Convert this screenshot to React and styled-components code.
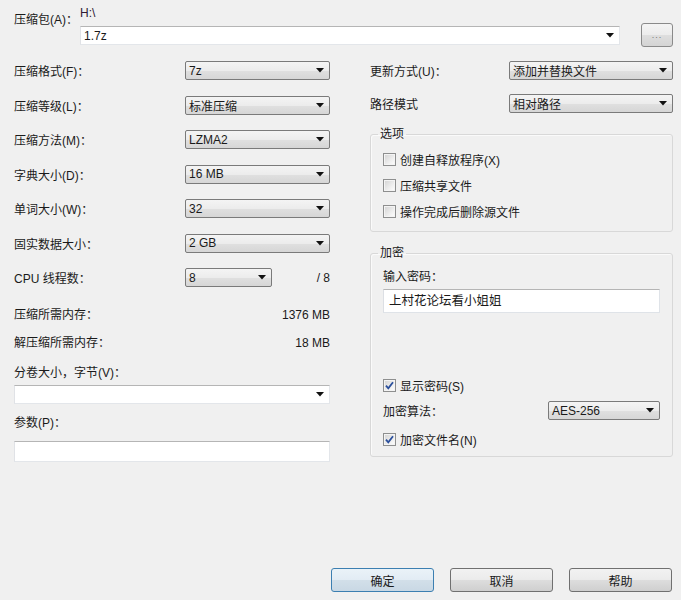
import React from 'react';
import styled, { createGlobalStyle } from 'styled-components';

const GlobalStyle = createGlobalStyle`
  html, body {
    margin: 0;
    padding: 0;
    background: #f0f0f0;
  }
  body {
    font-family: "Liberation Sans", "Noto Sans CJK SC", sans-serif;
    font-size: 12px;
    color: #1a1a1a;
  }
  * {
    box-sizing: border-box;
  }
`;

const Arrow = () => (
    <svg width="8" height="5" viewBox="0 0 8 5">
        <polygon points="0,0 8,0 4,4.5" fill="#111" />
    </svg>
);

const Check = () => (
    <svg width="11" height="11" viewBox="0 0 11 11">
        <path d="M2 5.6 L4.3 8.3 L9 2.2" fill="none" stroke="#2a4f9c" strokeWidth="1.8" />
    </svg>
);

const Select = ({ value, width }) => (
    <SelectBox style={width ? { width } : undefined}>
        <span>{value}</span>
        <Arrow />
    </SelectBox>
);

const EditCombo = ({ value }) => (
    <EditBox>
        <span>{value}</span>
        <Arrow />
    </EditBox>
);

const CheckItem = ({ checked, children }) => (
    <CheckRow>
        <CheckBox>{checked && <Check />}</CheckBox>
        <span>{children}</span>
    </CheckRow>
);

const App = () => {
    return (
        <Window>
            <GlobalStyle />
            <TopRow>
                <TopLabel>压缩包(A)：</TopLabel>
                <PathColumn>
                    <PathHint>H:\</PathHint>
                    <EditCombo value="1.7z" />
                </PathColumn>
                <BrowseButton>...</BrowseButton>
            </TopRow>

            <Columns>
                <LeftColumn>
                    <FieldList>
                        <FieldRow>
                            <span>压缩格式(F)：</span>
                            <Select value="7z" />
                        </FieldRow>
                        <FieldRow>
                            <span>压缩等级(L)：</span>
                            <Select value="标准压缩" />
                        </FieldRow>
                        <FieldRow>
                            <span>压缩方法(M)：</span>
                            <Select value="LZMA2" />
                        </FieldRow>
                        <FieldRow>
                            <span>字典大小(D)：</span>
                            <Select value="16 MB" />
                        </FieldRow>
                        <FieldRow>
                            <span>单词大小(W)：</span>
                            <Select value="32" />
                        </FieldRow>
                        <FieldRow>
                            <span>固实数据大小：</span>
                            <Select value="2 GB" />
                        </FieldRow>
                        <CpuRow>
                            <span>CPU 线程数：</span>
                            <Select value="8" />
                            <Value>/ 8</Value>
                        </CpuRow>
                    </FieldList>
                    <InfoRow $mt={20}>
                        <span>压缩所需内存：</span>
                        <Value>1376 MB</Value>
                    </InfoRow>
                    <InfoRow $mt={12}>
                        <span>解压缩所需内存：</span>
                        <Value>18 MB</Value>
                    </InfoRow>
                    <StackLabel $mt={14}>分卷大小，字节(V)：</StackLabel>
                    <EditCombo value="" />
                    <StackLabel $mt={11}>参数(P)：</StackLabel>
                    <TextBox />
                </LeftColumn>

                <RightColumn>
                    <WideRow>
                        <span>更新方式(U)：</span>
                        <Select value="添加并替换文件" />
                    </WideRow>
                    <WideRow $mt={14}>
                        <span>路径模式</span>
                        <Select value="相对路径" />
                    </WideRow>

                    <Group $mt={13}>
                        <Legend>选项</Legend>
                        <GroupBody $pt={4} $pb={7}>
                            <CheckItem>创建自释放程序(X)</CheckItem>
                            <CheckItem>压缩共享文件</CheckItem>
                            <CheckItem>操作完成后删除源文件</CheckItem>
                        </GroupBody>
                    </Group>

                    <Group $mt={13}>
                        <Legend>加密</Legend>
                        <GroupBody $pt={8} $pb={4}>
                            <StackLabel>输入密码：</StackLabel>
                            <PasswordBox>上村花论坛看小姐姐</PasswordBox>
                            <Spacer $h={59} />
                            <CheckItem checked>显示密码(S)</CheckItem>
                            <AlgoRow>
                                <span>加密算法：</span>
                                <Select value="AES-256" />
                            </AlgoRow>
                            <Spacer $h={6} />
                            <CheckItem checked>加密文件名(N)</CheckItem>
                        </GroupBody>
                    </Group>
                </RightColumn>
            </Columns>

            <ButtonBar>
                <DialogButton $primary>确定</DialogButton>
                <DialogButton>取消</DialogButton>
                <DialogButton>帮助</DialogButton>
            </ButtonBar>
        </Window>
    );
};

export default App;

const Window = styled.div`
display: flex;
flex-direction: column;
height: 600px;
width: 681px;
padding: 5px 8px 8px 14px;
background: #f0f0f0;
`;

const TopRow = styled.div`
display: flex;
align-items: flex-start;
`;

const TopLabel = styled.div`
width: 66px;
margin-top: 7px;
line-height: 16px;
white-space: nowrap;
`;

const PathColumn = styled.div`
display: flex;
flex-direction: column;
gap: 5px;
width: 540px;
`;

const PathHint = styled.div`
line-height: 16px;
color: #2e1a33;
`;

const BrowseButton = styled.div`
width: 32px;
height: 24px;
margin: 18px 0 0 21px;
display: flex;
align-items: center;
justify-content: center;
font-size: 9px;
letter-spacing: 1px;
color: #777;
border: 1px solid #8a8a8a;
border-radius: 3px;
background: linear-gradient(#f4f4f4 0%, #ececec 50%, #dedede 51%, #d4d4d4 100%);
`;

const SelectBox = styled.div`
display: flex;
align-items: center;
justify-content: space-between;
width: 100%;
height: 19px;
padding: 0 5px 0 3px;
border: 1px solid #7a7a7a;
border-radius: 2px;
background: linear-gradient(#f4f4f4 0%, #ececec 50%, #e0e0e0 51%, #d6d6d6 100%);
white-space: nowrap;
`;

const EditBox = styled.div`
display: flex;
align-items: center;
justify-content: space-between;
height: 19px;
padding: 0 5px 0 3px;
background: #fff;
border: 1px solid;
border-color: #b5b5b5 #e3e6ea #e3e6ea #e0e2e6;
`;

const TextBox = styled.div`
height: 21px;
margin-top: 6px;
background: #fff;
border: 1px solid;
border-color: #b5b5b5 #e3e6ea #e3e6ea #e0e2e6;
`;

const Columns = styled.div`
display: flex;
gap: 40px;
margin-top: 14px;
`;

const LeftColumn = styled.div`
display: flex;
flex-direction: column;
width: 316px;
`;

const RightColumn = styled.div`
display: flex;
flex-direction: column;
width: 303px;
`;

const FieldList = styled.div`
display: flex;
flex-direction: column;
gap: 15.5px;
`;

const FieldRow = styled.div`
display: grid;
grid-template-columns: 171px 1fr;
align-items: center;
height: 19px;
white-space: nowrap;
`;

const CpuRow = styled(FieldRow)`
grid-template-columns: 171px 87px 1fr;
`;

const WideRow = styled(FieldRow)`
grid-template-columns: 139px 1fr;
margin-top: ${(p) => p.$mt || 0}px;
`;

const AlgoRow = styled(FieldRow)`
grid-template-columns: 165px 1fr;
margin-top: 3px;
`;

const Value = styled.span`
text-align: right;
`;

const InfoRow = styled.div`
display: flex;
justify-content: space-between;
line-height: 16px;
margin-top: ${(p) => p.$mt || 0}px;
`;

const StackLabel = styled.div`
line-height: 16px;
margin: ${(p) => p.$mt || 0}px 0 4px;
white-space: nowrap;
`;

const Group = styled.fieldset`
margin: ${(p) => p.$mt || 0}px 0 0;
padding: 0 12px;
border: 1px solid #d8d8d8;
border-radius: 3px;
box-shadow: inset 1px 1px 0 #fafafa;
min-width: 0;
`;

const Legend = styled.legend`
padding: 0 2px;
margin-left: -5px;
line-height: 16px;
`;

const GroupBody = styled.div`
display: flex;
flex-direction: column;
padding: ${(p) => p.$pt}px 0 ${(p) => p.$pb}px;
`;

const CheckRow = styled.div`
display: flex;
align-items: center;
gap: 4px;
height: 26px;
white-space: nowrap;
`;

const CheckBox = styled.span`
display: flex;
align-items: center;
justify-content: center;
width: 13px;
height: 13px;
border: 1px solid #8e8f8f;
background: linear-gradient(135deg, #d2d2d2 0%, #eeeeee 60%, #ffffff 100%);
box-shadow: inset 0 0 0 1px #f4f4f4;
`;

const PasswordBox = styled.div`
height: 24px;
padding: 3px 5px 0;
font-size: 12.5px;
line-height: 16px;
background: #fff;
border: 1px solid;
border-color: #b5b5b5 #dfe3e8 #dfe3e8 #dcdfe4;
`;

const Spacer = styled.div`
height: ${(p) => p.$h}px;
flex-shrink: 0;
`;

const ButtonBar = styled.div`
display: flex;
justify-content: flex-end;
gap: 16px;
margin-top: auto;
padding-right: 1px;
`;

const DialogButton = styled.div`
display: flex;
align-items: center;
justify-content: center;
width: 103px;
height: 24px;
border: 1px solid ${(p) => (p.$primary ? '#3c7fb1' : '#707070')};
border-radius: 3px;
background: ${(p) =>
        p.$primary
            ? 'linear-gradient(#eaf2f8 0%, #e2ecf4 50%, #d2dfe9 51%, #c9d8e4 100%)'
            : 'linear-gradient(#f2f2f2 0%, #ebebeb 50%, #dddddd 51%, #cfcfcf 100%)'};
`;
